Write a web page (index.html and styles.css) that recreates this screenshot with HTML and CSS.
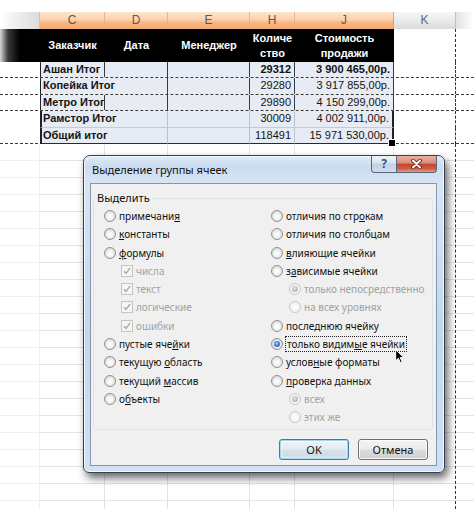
FILE: index.html
```html
<!DOCTYPE html>
<html lang="ru">
<head>
<meta charset="utf-8">
<title>Выделение группы ячеек</title>
<link rel="stylesheet" href="styles.css">
</head>
<body>
<div class="page">
  <div class="sheet">
    <div class="colhead">
      <div class="ch ch-stub"></div>
      <div class="ch ch-sel">C</div>
      <div class="ch ch-sel">D</div>
      <div class="ch ch-sel">E</div>
      <div class="ch ch-sel">H</div>
      <div class="ch ch-sel ch-last">J</div>
      <div class="ch ch-k">K</div>
      <div class="ch ch-rest"></div>
    </div>
    <div class="hdr">
      <div class="hc hc-stub"></div>
      <div class="hc">Заказчик</div>
      <div class="hc">Дата</div>
      <div class="hc">Менеджер</div>
      <div class="hc">Количе<br>ство</div>
      <div class="hc">Стоимость<br>продажи</div>
      <div class="hc hc-k"></div>
      <div class="hc hc-rest"></div>
    </div>
    <div class="row r16 dash">
      <div class="c stub"></div>
      <div class="c t first b">Ашан Итог</div>
      <div class="c t"></div>
      <div class="c t"></div>
      <div class="c t num b">29312</div>
      <div class="c t num b">3 900 465,00р.</div>
      <div class="c k"></div>
      <div class="c rest"></div>
    </div>
    <div class="row r17 dash">
      <div class="c stub"></div>
      <div class="c t first b span2">Копейка Итог</div>
      <div class="c t"></div>
      <div class="c t num">29280</div>
      <div class="c t num">3 917 855,00р.</div>
      <div class="c k"></div>
      <div class="c rest"></div>
    </div>
    <div class="row r16 dash">
      <div class="c stub"></div>
      <div class="c t first b">Метро Итог</div>
      <div class="c t"></div>
      <div class="c t"></div>
      <div class="c t num">29890</div>
      <div class="c t num">4 150 299,00р.</div>
      <div class="c k"></div>
      <div class="c rest"></div>
    </div>
    <div class="row r17">
      <div class="c stub"></div>
      <div class="c t first thick b span2 lt lb">Рамстор Итог</div>
      <div class="c t lt lb"></div>
      <div class="c t num lt lb">30009</div>
      <div class="c t num lb thickr">4 002 911,00р.</div>
      <div class="c k"></div>
      <div class="c rest"></div>
    </div>
    <div class="row r16 dash">
      <div class="c stub"></div>
      <div class="c t first thick b span2 lt db">Общий итог</div>
      <div class="c t lt db"></div>
      <div class="c t num lt db">118491</div>
      <div class="c t num db thickr handle">15 971 530,00р.</div>
      <div class="c k"></div>
      <div class="c rest"></div>
    </div>
    <div class="fill">
      <div class="fc fs"></div>
      <div class="fc"></div>
      <div class="fc"></div>
      <div class="fc"></div>
      <div class="fc"></div>
      <div class="fc"></div>
      <div class="fc fk"></div>
      <div class="fc fr"></div>
    </div>
  </div>

  <div class="dialog">
    <div class="titlebar">
      <span class="title">Выделение группы ячеек</span>
      <div class="tbtns">
        <span class="tb help">?</span>
        <span class="tb close"><svg width="11" height="10" viewBox="0 0 11 10"><path d="M2 1.5 L9 8.5 M9 1.5 L2 8.5" stroke="#5a1a10" stroke-width="3.6" stroke-linecap="round"/><path d="M2 1.5 L9 8.5 M9 1.5 L2 8.5" stroke="#fff" stroke-width="2" stroke-linecap="round"/></svg></span>
      </div>
    </div>
    <div class="client">
      <fieldset class="group">
        <legend>Выделить</legend>
        <div class="opts">
          <div class="col">
            <div class="opt"><span class="radio"></span><span>примечани<u>я</u></span></div>
            <div class="opt"><span class="radio"></span><span><u>к</u>онстанты</span></div>
            <div class="opt"><span class="radio"></span><span><u>ф</u>ормулы</span></div>
            <div class="opt sub dis"><span class="check"><svg width="10" height="10" viewBox="0 0 10 10"><path d="M2 5.2 L4 7.5 L8.2 1.8" fill="none" stroke="#a9a9a9" stroke-width="1.4"/></svg></span><span>числа</span></div>
            <div class="opt sub dis"><span class="check"><svg width="10" height="10" viewBox="0 0 10 10"><path d="M2 5.2 L4 7.5 L8.2 1.8" fill="none" stroke="#a9a9a9" stroke-width="1.4"/></svg></span><span>текст</span></div>
            <div class="opt sub dis"><span class="check"><svg width="10" height="10" viewBox="0 0 10 10"><path d="M2 5.2 L4 7.5 L8.2 1.8" fill="none" stroke="#a9a9a9" stroke-width="1.4"/></svg></span><span>логические</span></div>
            <div class="opt sub dis"><span class="check"><svg width="10" height="10" viewBox="0 0 10 10"><path d="M2 5.2 L4 7.5 L8.2 1.8" fill="none" stroke="#a9a9a9" stroke-width="1.4"/></svg></span><span>ошибки</span></div>
            <div class="opt"><span class="radio"></span><span>пустые яче<u>й</u>ки</span></div>
            <div class="opt"><span class="radio"></span><span>текущую <u>о</u>бласть</span></div>
            <div class="opt"><span class="radio"></span><span>текущий <u>м</u>ассив</span></div>
            <div class="opt"><span class="radio"></span><span>о<u>б</u>ъекты</span></div>
          </div>
          <div class="col">
            <div class="opt"><span class="radio"></span><span>отличия по стр<u>о</u>кам</span></div>
            <div class="opt"><span class="radio"></span><span>отличия по столбцам</span></div>
            <div class="opt"><span class="radio"></span><span><u>в</u>лияющие ячейки</span></div>
            <div class="opt"><span class="radio"></span><span>з<u>а</u>висимые ячейки</span></div>
            <div class="opt sub2 dis"><span class="radio on"></span><span>только непосредственно</span></div>
            <div class="opt sub2 dis"><span class="radio"></span><span>на всех уровнях</span></div>
            <div class="opt"><span class="radio"></span><span>после<u>д</u>нюю ячейку</span></div>
            <div class="opt"><span class="radio on"></span><span class="focus">только видим<u>ы</u>е ячейки</span></div>
            <div class="opt"><span class="radio"></span><span>услов<u>н</u>ые форматы</span></div>
            <div class="opt"><span class="radio"></span><span><u>п</u>роверка данных</span></div>
            <div class="opt sub2 dis"><span class="radio on"></span><span>всех</span></div>
            <div class="opt sub2 dis"><span class="radio"></span><span>этих же</span></div>
          </div>
        </div>
      </fieldset>
      <div class="buttons">
        <button class="btn default">OK</button>
        <button class="btn">Отмена</button>
      </div>
    </div>
  </div>

  <svg class="cursor" width="10" height="15" viewBox="0 0 10 15"><path d="M0.7 0.7 L0.7 11.8 L3.4 9.3 L5.4 13.8 L7.2 13 L5.2 8.6 L8.8 8.6 Z" fill="#000" stroke="#fff" stroke-width="1" stroke-linejoin="round"/></svg>
</div>
</body>
</html>
```

FILE: styles.css
```css
* { box-sizing: border-box; margin: 0; padding: 0; }
html, body { width: 474px; height: 509px; overflow: hidden; background: #fff; }
body { font-family: "Liberation Sans", Arial, sans-serif; }
.page { position: relative; width: 474px; height: 509px; overflow: hidden; background: #fff; }

.sheet { padding-top: 12px; }
.colhead, .hdr, .row, .fill {
  display: grid;
  grid-template-columns: 40px 65px 63px 82px 45px 99px 62px 1fr;
}

/* column letters */
.colhead { height: 17px; }
.ch { font-size: 12px; line-height: 17px; text-align: center; color: #6a5446; border-right: 1px solid #e9b58e; }
.ch-sel { background: linear-gradient(#fde4cc, #fcd3ae 45%, #f8b885 60%, #f5a870); }
.ch-last { border-right-color: #c9a386; }
.ch-stub { background: linear-gradient(90deg, #ffffff, #f0f0f0 15px, #dcdcdc); border-right-color: #c4c4c4; }
.ch-k { background: linear-gradient(#f7f7f7, #eaeaea 50%, #dadada); color: #666; border-right-color: #c0c0c0; }
.ch-rest { background: linear-gradient(90deg, #e2e2e2, #ffffff); border-right: 0; }

/* black header row */
.hdr { height: 33px; }
.hc { background: #000; color: #fff; font-weight: bold; font-size: 11px; line-height: 15px;
  display: flex; align-items: center; justify-content: center; text-align: center; }
.hc-stub { background: linear-gradient(90deg, #d8d8d8, #3a3a3a 8px, #000 20px); }
.hc-k { background: #fff; border-right: 1px dashed #333; }
.hc-rest { background: #fff; }

/* data rows */
.r16 { height: 16px; }
.r17 { height: 17px; }
.dash { border-bottom: 1px dashed #3a3a3a; }
.c { font-size: 11px; line-height: 15px; white-space: nowrap; color: #141414; padding: 0 3px; }
.t { background: #e7ebf3; border-right: 1px solid #3a3a3a; }
.first { border-left: 1px solid #222; padding-left: 2px; }
.thick { border-left-width: 2px; padding-left: 1px; }
.span2 { grid-column: span 2; }
.num { text-align: right; }
.b { font-weight: bold; }
.lt { border-right-color: #b9c3d2; }
.lb { border-bottom: 1px solid #c3cbd8; }
.db { border-bottom: 1px solid #2a2a2a; }
.thickr { border-right: 2px solid #222; }
.handle { position: relative; }
.handle::after { content: ""; position: absolute; right: -4px; bottom: -4px; width: 6px; height: 6px; background: #000; border: 1px solid #fff; }
.k { border-right: 1px dashed #333; }

/* empty grid */
.fill { height: 365px; }
.fc { border-right: 1px solid #dfe2e6;
  background: repeating-linear-gradient(to bottom, transparent 0 16px, #e2e4e8 16px 17px); }
.fs { border-right-color: #eceef0; background: repeating-linear-gradient(to bottom, transparent 0 16px, #eef0f2 16px 17px); }
.fk { border-right: 1px dashed #333; }
.fr { border-right: 0; }

/* dialog */
.dialog {
  position: absolute; left: 83px; top: 155px; width: 362px; height: 318px;
  border: 1px solid #34404e; border-radius: 7px 7px 6px 6px;
  background: linear-gradient(180deg, #e1ecf7 0, #c9dcf0 10px, #d6e5f4 26px, #c3d8ee 55%, #cfe1f3 100%);
  box-shadow: 3px 5px 9px rgba(0,0,0,.6), inset 0 0 0 1px rgba(255,255,255,.75);
  display: flex; flex-direction: column;
  font-family: "Noto Sans", "Open Sans", sans-serif;
}
.titlebar { height: 27px; display: flex; justify-content: space-between; align-items: flex-start; }
.title { font-size: 11px; line-height: 27px; padding-left: 8px; color: #111; }
.tbtns { display: flex; margin-right: 7px; }
.tb { height: 17px; display: flex; align-items: center; justify-content: center; border: 1px solid #56677c; border-top: 0; }
.help { width: 25px; border-radius: 0 0 0 4px; border-right: 0;
  background: linear-gradient(#eef3f9, #d8e4f0 45%, #bfd1e5 50%, #cfdfef);
  color: #3a5374; font-size: 12px; font-weight: bold; line-height: 1; }
.close { width: 41px; border-radius: 0 0 4px 0;
  background: linear-gradient(#eab0a2, #d98a78 45%, #c4432b 52%, #cf5f49 80%, #e49c86); }

.client { margin: 0 0 6px 6px; width: 347px; flex: 1; border: 1px solid #8497ad;
  background: #f0f0f0; display: flex; flex-direction: column; }

.group { margin: 6px 3px 0 2px; height: 240px; border: 1px solid #dde4e9; border-radius: 3px; padding: 0; min-width: 0; }
.group legend { font-size: 11px; line-height: 16px; padding: 0 2px; margin-left: 1px; color: #111; }
.opts { display: grid; grid-template-columns: 167px 1fr; padding: 1px 0 0 10px; }
.col { display: flex; flex-direction: column; }
.opt { height: 18.27px; display: flex; align-items: center; font-size: 10px; color: #111; white-space: nowrap; }
.opt u { text-decoration: underline; text-underline-offset: 1px; }
.opt.dis { color: #a3a3a3; }
.sub { margin-left: 17px; }
.sub2 { margin-left: 18px; }

.radio { width: 12px; height: 12px; flex: none; margin-right: 3px; border-radius: 50%; position: relative;
  border: 1px solid #929292;
  background: radial-gradient(circle at 50% 55%, #ffffff 0, #f4f4f4 35%, #d9d9d9 75%, #c6c6c6 100%); }
.dis .radio { border-color: #c9c9c9; background: radial-gradient(circle at 50% 55%, #fff 0, #f7f7f7 40%, #e6e6e6 100%); }
.radio.on::after { content: ""; position: absolute; left: 2px; top: 2px; width: 6px; height: 6px; border-radius: 50%;
  background: radial-gradient(circle at 45% 40%, #a9d4fb 0, #3d86d8 45%, #174b93 100%); }
.dis .radio.on::after { background: radial-gradient(circle at 45% 40%, #e6e6e6 0, #b8b8b8 60%, #a0a0a0 100%); }

.check { width: 12px; height: 12px; flex: none; margin-right: 3px; border: 1px solid #c4c4c4; background: #f6f6f6;
  display: flex; align-items: center; justify-content: center; }
.focus { outline: 1px dotted #222; outline-offset: 0; padding: 0 1px; }

.buttons { margin-top: auto; margin-bottom: 5px; padding-right: 8px; display: flex; justify-content: flex-end; gap: 9px; }
.btn { width: 70px; height: 21px; font-family: "Noto Sans", "Open Sans", sans-serif; font-size: 11px; color: #111;
  border: 1px solid #707070; border-radius: 3px;
  background: linear-gradient(#f3f3f3, #ebebeb 48%, #dddddd 52%, #cfcfcf);
  box-shadow: inset 0 0 0 1px rgba(255,255,255,.8); }
.btn.default { border-color: #3a7fae;
  background: linear-gradient(#eef3f6, #e4ecf1 48%, #d6e1e8 52%, #ccd9e2);
  box-shadow: inset 0 0 0 1px #a6d6ef, inset 0 0 2px 2px rgba(255,255,255,.5); }

.cursor { position: absolute; left: 395px; top: 349px; }
```
